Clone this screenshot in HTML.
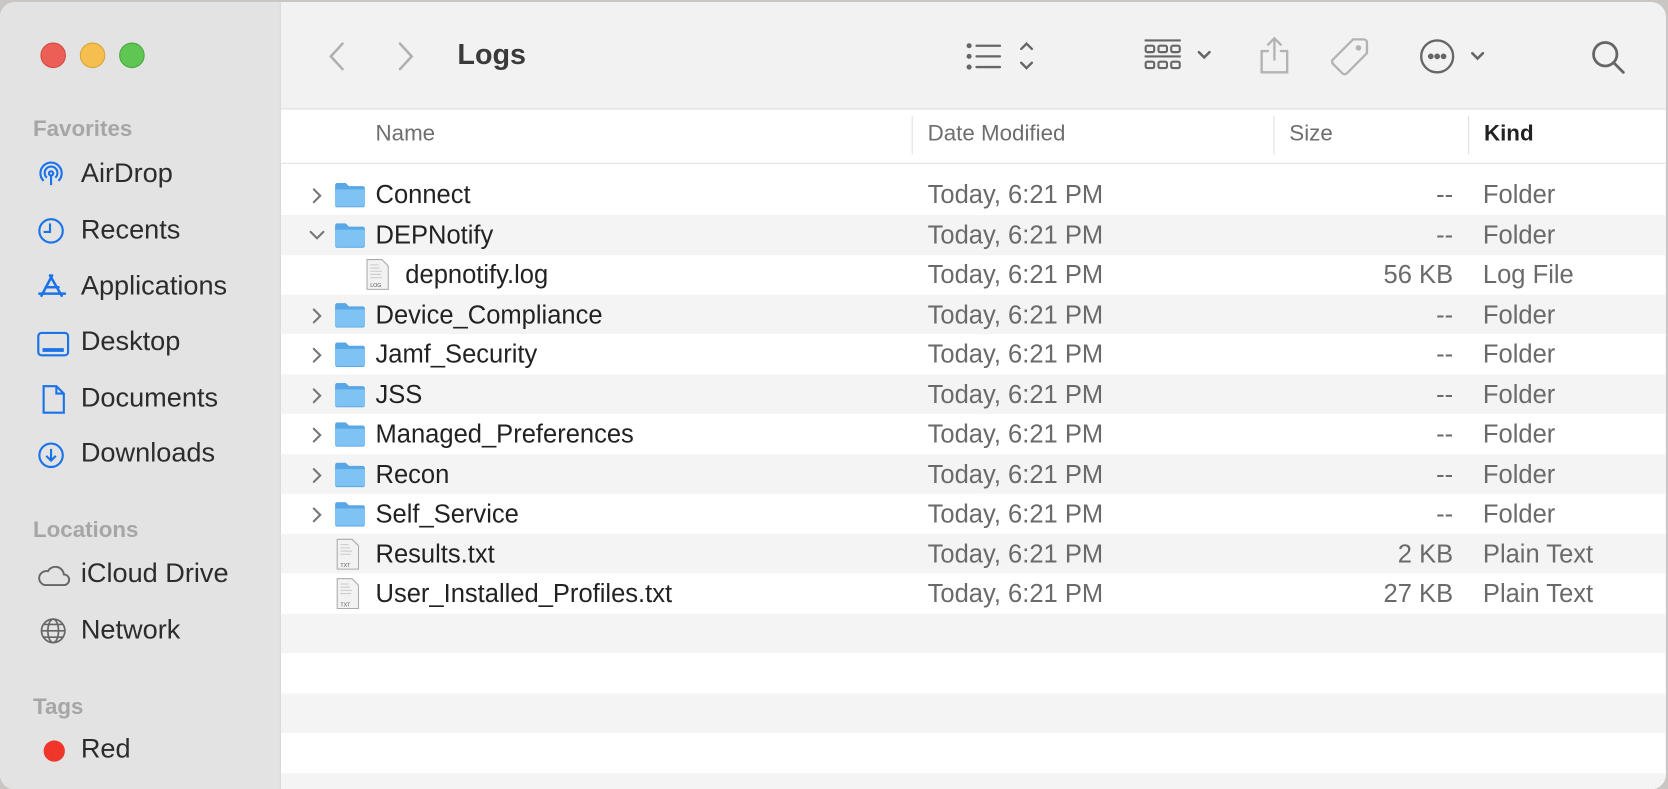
<!DOCTYPE html>
<html><head><meta charset="utf-8"><style>
html,body{margin:0;padding:0;width:1668px;height:762px;overflow:hidden;background:#c9c6c4;}
#w{position:absolute;left:0;top:0;width:1568px;height:716px;transform:scale(1.06378);transform-origin:0 0;font-family:"Liberation Sans",sans-serif;}
.win{position:absolute;left:0;top:2px;width:1566px;height:740px;border-radius:14px;overflow:hidden;background:#fff;}
.side{position:absolute;left:0;top:0;width:263px;height:100%;background:#e3e3e3;border-right:1px solid #d4d4d4;}
.dot{position:absolute;top:38px;width:24px;height:24px;border-radius:50%;}
.sh{position:absolute;left:31px;font-size:21px;font-weight:bold;color:#a6a6a6;}
.si{position:absolute;left:76px;font-size:25.5px;color:#2c2c2c;}
.ic{position:absolute;left:34px;}
.tb{position:absolute;left:264px;top:0;right:0;height:100px;background:#f2f2f2;border-bottom:1px solid #dcdcdc;}
.hd{position:absolute;left:264px;top:101px;right:0;height:50px;border-bottom:1px solid #e2e2e2;background:#fff;font-size:21px;color:#6e6e6e;}
.hd span{position:absolute;top:11px;}
.div{position:absolute;top:6px;width:1px;height:36px;background:#e0e0e0;}
.row{position:absolute;left:264px;right:0;height:37.5px;font-size:24px;color:#222;}
.row.g{background:#f4f4f4;}
.row span{position:absolute;top:6px;white-space:nowrap;}
.dt{left:608px;color:#6a6a6a;}
.sz{right:200px;color:#6a6a6a;text-align:right;}
.kd{left:1130px;color:#6a6a6a;}
.chev{position:absolute;left:28px;top:11px;}
.fold{position:absolute;left:50px;top:7px;}
</style></head><body><div id="w"><div class="win">
<div class="side">
<div class="dot" style="left:38px;background:#ec5f57;border:1px solid #d4493f;box-sizing:border-box"></div>
<div class="dot" style="left:75px;background:#f5bf4f;border:1px solid #d9a338;box-sizing:border-box"></div>
<div class="dot" style="left:112px;background:#5fc553;border:1px solid #48a83d;box-sizing:border-box"></div>
<div class="sh" style="top:108px">Favorites</div>
<svg class="ic" style="top:148px" width="28" height="28" viewBox="0 0 28 28" fill="none" stroke="#1a73e8" stroke-width="2"><circle cx="14" cy="13" r="2"/><path d="M10 17a6 6 0 1 1 8 0M7 20a10 10 0 1 1 14 0M14 15v9"/></svg>
<div class="si" style="top:147px">AirDrop</div>
<svg class="ic" style="top:202px" width="28" height="28" viewBox="0 0 28 28" fill="none" stroke="#1a73e8" stroke-width="2"><circle cx="14" cy="13" r="11"/><path d="M13 6v8h-6"/></svg>
<div class="si" style="top:200px">Recents</div>
<svg class="ic" style="top:254px" width="30" height="28" viewBox="0 0 30 28" fill="none" stroke="#1a73e8" stroke-width="2.4" stroke-linecap="round"><path d="M15 3L5 22M13 3l11 19M3 20h24M9 14h12"/></svg>
<div class="si" style="top:253px">Applications</div>
<svg class="ic" style="top:309px" width="32" height="26" viewBox="0 0 32 26" fill="none" stroke="#1a73e8" stroke-width="2"><rect x="2" y="2" width="28" height="21" rx="3"/><path d="M6 18h20" stroke-width="3.5"/></svg>
<div class="si" style="top:305px">Desktop</div>
<svg class="ic" style="top:359px;left:38px" width="24" height="30" viewBox="0 0 24 30" fill="none" stroke="#1a73e8" stroke-width="2"><path d="M3 2h12l7 7v18H3zM15 2v7h7"/></svg>
<div class="si" style="top:358px">Documents</div>
<svg class="ic" style="top:412px" width="28" height="28" viewBox="0 0 28 28" fill="none" stroke="#1a73e8" stroke-width="2"><circle cx="14" cy="14" r="11"/><path d="M14 8v11M9.5 14.5L14 19l4.5-4.5"/></svg>
<div class="si" style="top:410px">Downloads</div>
<div class="sh" style="top:485px">Locations</div>
<svg class="ic" style="top:527px;left:33px" width="34" height="24" viewBox="0 0 34 24" fill="none" stroke="#666" stroke-width="1.8"><path d="M9 21h18a5 5 0 0 0 0-10 8 8 0 0 0-15-3 6 6 0 0 0-3 13z"/></svg>
<div class="si" style="top:523px">iCloud Drive</div>
<svg class="ic" style="top:577px;left:36px" width="28" height="28" viewBox="0 0 28 28" fill="none" stroke="#666" stroke-width="1.6"><circle cx="14" cy="14" r="11"/><ellipse cx="14" cy="14" rx="5" ry="11"/><path d="M3 14h22M5 8h18M5 20h18"/></svg>
<div class="si" style="top:576px">Network</div>
<div class="sh" style="top:651px">Tags</div>
<div style="position:absolute;left:41px;top:694px;width:20px;height:20px;border-radius:50%;background:#f0352b"></div>
<div class="si" style="top:688px">Red</div>
</div>
<div class="tb">
<svg style="position:absolute;left:42px;top:36px" width="20" height="30" viewBox="0 0 20 30" fill="none" stroke="#b0b0b0" stroke-width="2.4" stroke-linecap="round"><path d="M16 3L5 15l11 12"/></svg>
<svg style="position:absolute;left:108px;top:36px" width="20" height="30" viewBox="0 0 20 30" fill="none" stroke="#b0b0b0" stroke-width="2.4" stroke-linecap="round"><path d="M4 3l11 12L4 27"/></svg>
<div style="position:absolute;left:166px;top:34px;font-size:27px;font-weight:bold;color:#3a3a3a">Logs</div>
<svg style="position:absolute;left:644px;top:36px" width="70" height="30" viewBox="0 0 70 30" fill="none" stroke="#666" stroke-width="2.2" stroke-linecap="round"><circle cx="3" cy="5" r="1.3" fill="#666"/><circle cx="3" cy="15" r="1.3" fill="#666"/><circle cx="3" cy="25" r="1.3" fill="#666"/><path d="M10 5h22M10 15h22M10 25h22M52 8l5-5 5 5M52 21l5 5 5-5"/></svg>
<svg style="position:absolute;left:810px;top:34px" width="75" height="34" viewBox="0 0 75 34" fill="none" stroke="#666" stroke-width="2"><path d="M2 2h34M2 17h34"/><rect x="3" y="7" width="8" height="6" rx="1.5"/><rect x="15" y="7" width="8" height="6" rx="1.5"/><rect x="27" y="7" width="8" height="6" rx="1.5"/><rect x="3" y="22" width="8" height="6" rx="1.5"/><rect x="15" y="22" width="8" height="6" rx="1.5"/><rect x="27" y="22" width="8" height="6" rx="1.5"/><path d="M53 13l5 5 5-5" stroke-width="2.4" stroke-linecap="round"/></svg>
<svg style="position:absolute;left:918px;top:32px" width="32" height="38" viewBox="0 0 32 38" fill="none" stroke="#b3b3b3" stroke-width="2.2" stroke-linecap="round"><path d="M16 2v20M10 8l6-6 6 6M10 14H4v20h24V14h-6"/></svg>
<svg style="position:absolute;left:985px;top:32px" width="40" height="40" viewBox="0 0 40 40" fill="none" stroke="#b3b3b3" stroke-width="2.2"><path d="M23 3h10a3 3 0 0 1 3 3v10L17 35a3 3 0 0 1-4 0L4 26a3 3 0 0 1 0-4z"/><circle cx="28" cy="11" r="1.5" fill="#b3b3b3"/></svg>
<svg style="position:absolute;left:1070px;top:34px" width="70" height="34" viewBox="0 0 70 34" fill="none" stroke="#666" stroke-width="2.2"><circle cx="17" cy="17" r="15"/><circle cx="11" cy="17" r="1.6" fill="#666"/><circle cx="17" cy="17" r="1.6" fill="#666"/><circle cx="23" cy="17" r="1.6" fill="#666"/><path d="M50 14l5 5 5-5" stroke-linecap="round" stroke-width="2.4"/></svg>
<svg style="position:absolute;left:1230px;top:34px" width="36" height="36" viewBox="0 0 36 36" fill="none" stroke="#666" stroke-width="2.6" stroke-linecap="round"><circle cx="15" cy="15" r="11"/><path d="M23 23l9 9"/></svg>
</div>
<div class="hd">
<span style="left:89px">Name</span>
<div class="div" style="left:593px"></div><span style="left:608px">Date Modified</span>
<div class="div" style="left:933px"></div><span style="left:948px">Size</span>
<div class="div" style="left:1116px"></div><span style="left:1131px;color:#222;font-weight:bold">Kind</span>
</div>
<div class="row" style="top:162px"><svg class="chev" width="12" height="18" viewBox="0 0 12 18" fill="none" stroke="#777" stroke-width="2" stroke-linecap="round"><path d="M3 3l6 6-6 6"/></svg><svg class="fold" width="30" height="24" viewBox="0 0 30 24"><path d="M1 3a2 2 0 0 1 2-2h8l3 3h13a2 2 0 0 1 2 2v16a2 2 0 0 1-2 2H3a2 2 0 0 1-2-2z" fill="#5aa7e6"/><rect x="1" y="7" width="28" height="16" rx="1.5" fill="#7fc2f4"/></svg><span style="left:89px">Connect</span><span class="dt">Today, 6:21 PM</span><span class="sz">--</span><span class="kd">Folder</span></div>
<div class="row g" style="top:200px"><svg class="chev" width="18" height="14" viewBox="0 0 18 14" fill="none" stroke="#777" stroke-width="2" stroke-linecap="round" style="left:25px;top:13px"><path d="M3 3l6 6 6-6"/></svg><svg class="fold" width="30" height="24" viewBox="0 0 30 24"><path d="M1 3a2 2 0 0 1 2-2h8l3 3h13a2 2 0 0 1 2 2v16a2 2 0 0 1-2 2H3a2 2 0 0 1-2-2z" fill="#5aa7e6"/><rect x="1" y="7" width="28" height="16" rx="1.5" fill="#7fc2f4"/></svg><span style="left:89px">DEPNotify</span><span class="dt">Today, 6:21 PM</span><span class="sz">--</span><span class="kd">Folder</span></div>
<div class="row" style="top:237px"><svg style="position:absolute;left:80px;top:4px" width="22" height="30" viewBox="0 0 22 30"><path d="M1 1h14l6 6v22H1z" fill="#f2f2f2" stroke="#aaa"/><path d="M4 6h8M4 9h9M4 12h11M4 15h10M4 18h11" stroke="#ccc"/><text x="4" y="27" font-size="5" fill="#555" font-family="Liberation Sans">LOG</text></svg><span style="left:117px">depnotify.log</span><span class="dt">Today, 6:21 PM</span><span class="sz">56 KB</span><span class="kd">Log File</span></div>
</div></div>
<script>
const names=["Device_Compliance","Jamf_Security","JSS","Managed_Preferences","Recon","Self_Service"];
let h="";
const chev='<svg class="chev" width="12" height="18" viewBox="0 0 12 18" fill="none" stroke="#777" stroke-width="2" stroke-linecap="round"><path d="M3 3l6 6-6 6"/></svg>';
const fold='<svg class="fold" width="30" height="24" viewBox="0 0 30 24"><path d="M1 3a2 2 0 0 1 2-2h8l3 3h13a2 2 0 0 1 2 2v16a2 2 0 0 1-2 2H3a2 2 0 0 1-2-2z" fill="#5aa7e6"/><rect x="1" y="7" width="28" height="16" rx="1.5" fill="#7fc2f4"/></svg>';
const txt='<svg style="position:absolute;left:52px;top:4px" width="22" height="30" viewBox="0 0 22 30"><path d="M1 1h14l6 6v22H1z" fill="#f2f2f2" stroke="#aaa"/><path d="M4 6h8M4 9h9M4 12h11M4 15h10" stroke="#ccc"/><text x="4" y="27" font-size="5" fill="#555" font-family="Liberation Sans">TXT</text></svg>';
names.forEach((n,i)=>{const k=i+3;h+=`<div class="row ${k%2?'g':''}" style="top:${162+k*37.5}px">${chev}${fold}<span style="left:89px">${n}</span><span class="dt">Today, 6:21 PM</span><span class="sz">--</span><span class="kd">Folder</span></div>`;});
[["Results.txt","2 KB"],["User_Installed_Profiles.txt","27 KB"]].forEach((f,j)=>{const k=9+j;h+=`<div class="row ${k%2?'g':''}" style="top:${162+k*37.5}px">${txt}<span style="left:89px">${f[0]}</span><span class="dt">Today, 6:21 PM</span><span class="sz">${f[1]}</span><span class="kd">Plain Text</span></div>`;});
for(let k=11;k<16;k++){h+=`<div class="row ${k%2?'g':''}" style="top:${162+k*37.5}px"></div>`;}
document.querySelector('.win').insertAdjacentHTML('beforeend',h);
</script>
</body></html>
